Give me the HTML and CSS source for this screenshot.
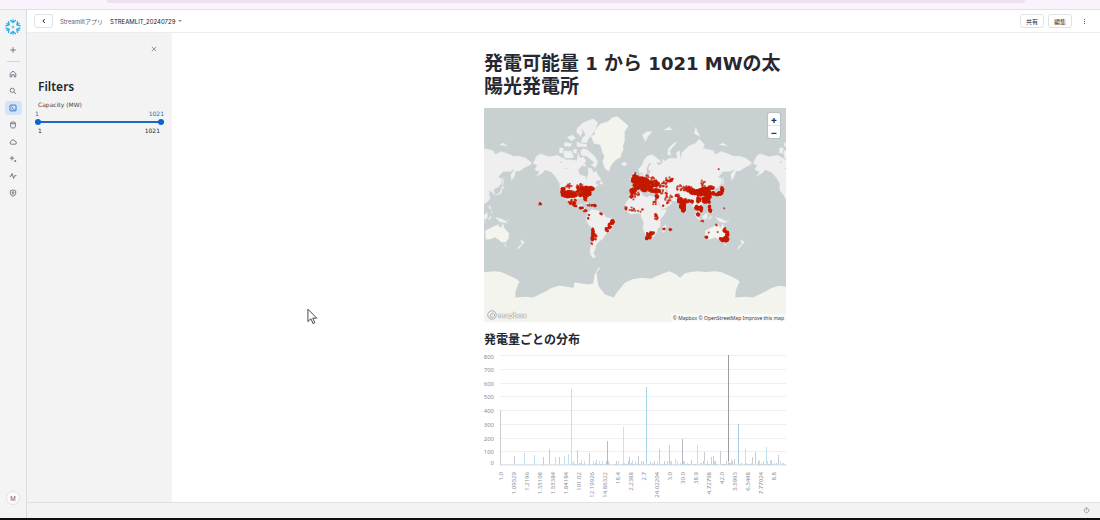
FILE: index.html
```html
<!DOCTYPE html>
<html lang="ja">
<head>
<meta charset="utf-8">
<title>STREAMLIT_20240729</title>
<link rel="stylesheet" href="styles.css">
</head>
<body>
<div class="browser-strip"><div class="browser-pill"></div></div>
<div class="app">
  <nav class="rail" aria-label="ナビゲーション">
    <a class="logo" href="#" aria-label="Snowflake">
      <svg viewBox="0 0 16 16" width="16" height="16">
        <g fill="none" stroke="#35aee3" stroke-width="1.4" stroke-linecap="round" stroke-linejoin="round">
          <g id="arm"><path d="M5.6 1.4 8 3.6l2.4-2.2M8 3.600V1"/></g>
          <use href="#arm" transform="rotate(60 8 8)"/>
          <use href="#arm" transform="rotate(120 8 8)"/>
          <use href="#arm" transform="rotate(180 8 8)"/>
          <use href="#arm" transform="rotate(240 8 8)"/>
          <use href="#arm" transform="rotate(300 8 8)"/>
        </g>
        <path d="M8 6.8 9.2 8 8 9.2 6.8 8z" fill="none" stroke="#35aee3" stroke-width=".8"/>
      </svg>
    </a>
    <a class="rail-item" href="#" aria-label="作成"><svg viewBox="0 0 8 8"><path d="M4 1.2v5.6M1.2 4h5.6"/></svg></a>
    <hr class="rail-rule">
    <a class="rail-item" href="#" aria-label="ホーム"><svg viewBox="0 0 8 8"><path d="M1.2 3.5 4 1.1l2.8 2.4v3.4H5.2V4.7H2.8v2.2H1.2z"/></svg></a>
    <a class="rail-item" href="#" aria-label="検索"><svg viewBox="0 0 8 8"><circle cx="3.3" cy="3.3" r="2.1"/><path d="m4.9 4.9 2.2 2.2"/></svg></a>
    <a class="rail-item active" href="#" aria-label="プロジェクト"><svg viewBox="0 0 8 8"><rect x="1" y="1.1" width="6" height="5.8" rx=".6"/><path d="m2.4 2.6 1.4 1.3-1.4 1.3M4.3 5.4h1.5"/></svg></a>
    <a class="rail-item" href="#" aria-label="データ"><svg viewBox="0 0 8 8"><ellipse cx="4" cy="1.9" rx="2.3" ry=".9"/><path d="M1.7 1.9v4.2c0 1.2 4.6 1.2 4.6 0V1.9"/></svg></a>
    <a class="rail-item" href="#" aria-label="データ製品"><svg viewBox="0 0 8 8"><path d="M2.1 6.2a1.4 1.4 0 0 1 0-2.7 2 2 0 0 1 3.9-.1 1.4 1.4 0 0 1 0 2.8z"/></svg></a>
    <a class="rail-item" href="#" aria-label="AI と ML"><svg viewBox="0 0 8 8"><path d="M3 1v4.4M.8 3.2h4.4M6.2 5v2M5.2 6h2"/></svg></a>
    <a class="rail-item" href="#" aria-label="モニタリング"><svg viewBox="0 0 8 8"><path d="M.5 4.2h1.6l1-2.7 1.5 5 1-2.8h1.9"/></svg></a>
    <a class="rail-item" href="#" aria-label="管理者"><svg viewBox="0 0 8 8"><path d="M4 .9 6.7 1.8v2.4C6.7 5.8 5.4 6.8 4 7.3 2.6 6.8 1.3 5.8 1.3 4.2V1.8z"/><circle cx="4" cy="3.4" r=".8"/><path d="M2.8 5.6c.3-1.2 2.1-1.2 2.4 0"/></svg></a>
    <button class="avatar" type="button">M</button>
  </nav>
  <div class="workspace">
    <header class="topbar">
      <button class="btn back" type="button" aria-label="戻る"><svg viewBox="0 0 6 6"><path d="M3.8 1 1.9 3l1.9 2"/></svg></button>
      <a class="crumb" href="#">Streamlitアプリ</a>
      <button class="app-name" type="button">STREAMLIT_20240729<span class="caret"></span></button>
      <div class="actions">
        <button class="btn" type="button">共有</button>
        <button class="btn" type="button">編集</button>
        <button class="more" type="button" aria-label="その他"><i></i><i></i><i></i></button>
      </div>
    </header>
    <div class="content">
      <aside class="filters">
        <button class="close" type="button" aria-label="閉じる"><svg viewBox="0 0 6 6"><path d="m.8.8 4.4 4.4M5.2.8.8 5.2"/></svg></button>
        <h2>Filters</h2>
        <label class="filter-label" for="cap-min">Capacity (MW)</label>
        <div class="values"><span>1</span><span>1021</span></div>
        <div class="slider">
          <input id="cap-min" class="range" type="range" min="1" max="1021" value="1">
          <input class="range top" type="range" min="1" max="1021" value="1021" aria-label="Capacity max">
        </div>
        <div class="limits"><span>1</span><span>1021</span></div>
      </aside>
      <main class="report">
        <div class="column">
          <h1>発電可能量<span class="latin"> 1 </span>から<span class="latin"> 1021 MW</span>の太陽光発電所</h1>
          <div class="map">
            <svg id="map" viewBox="0 0 302 214" role="img" aria-label="太陽光発電所の地図"></svg>
            <div class="zoom"><button type="button" aria-label="拡大">+</button><button type="button" aria-label="縮小">−</button></div>
            <a class="brand" href="#"><svg viewBox="0 0 10 10"><circle cx="5" cy="5" r="4.2"/><path d="M3 7c0-5 4.500-5 4.500-2S5 7 3 7zM5 3.800v1.600"/></svg>mapbox</a>
            <div class="credits"><a href="#">© Mapbox</a> <a href="#">© OpenStreetMap</a> <a href="#" class="improve">Improve this map</a></div>
          </div>
          <h3>発電量ごとの分布</h3>
          <svg id="chart" class="chart" viewBox="0 0 302 148" role="img" aria-label="発電量ごとの分布"></svg>
        </div>
      </main>
    </div>
    <footer class="statusbar">
      <svg viewBox="0 0 8 8"><path d="M2.400 1.700a2.700 2.700 0 1 0 3.200 0M4 .8v3.400M2.600 1.200h2.800"/></svg>
    </footer>
  </div>
</div>
<div class="window-edge"></div>
<svg class="cursor" viewBox="0 0 12 18"><path d="M1 1v13.500l3.300-3 2.200 5.200 2-.9-2.200-5h4.300z"/></svg>
<script src="script.js"></script>
</body>
</html>
```
FILE: styles.css
```css
* { box-sizing: border-box; }
body {
  margin: 0;
  min-height: 100vh;
  display: flex;
  flex-direction: column;
  background: #fff;
  color: #23262e;
  font-family: Inter, "Noto Sans CJK JP", sans-serif;
  font-size: 6px;
}
button {
  margin: 0;
  padding: 0;
  border: 0;
  background: none;
  color: inherit;
  font: inherit;
}
a { color: inherit; text-decoration: none; }
svg { display: block; }

.browser-strip {
  height: 10px;
  padding: 0 75px 0 107px;
  background: #faf3fc;
  border-bottom: 1px solid #e2dfe8;
}
.browser-pill {
  height: 3px;
  border-radius: 0 0 6px 6px;
  background: #ebe2ee;
}
.app { flex: 1; display: flex; }
.window-edge { height: 2px; background: #101010; }

.rail {
  width: 27px;
  flex: none;
  display: flex;
  flex-direction: column;
  align-items: center;
  padding: 9px 0 13px;
  background: #f4f4f4;
  border-right: 1px solid #d5dce2;
}
.logo { margin-bottom: 8px; }
.rail-item {
  width: 17px;
  height: 14px;
  margin-bottom: 3px;
  border-radius: 3px;
  display: grid;
  place-items: center;
  color: #596273;
}
.rail-item svg {
  width: 8px;
  height: 8px;
  fill: none;
  stroke: currentColor;
  stroke-width: .8;
}
.rail-item.active { background: #d3e5fb; color: #1a60ad; }
.rail-rule {
  width: 13px;
  margin: 1px 0 5px;
  border: 0;
  border-top: 1px solid #d2d6dc;
}
.avatar {
  width: 14px;
  height: 14px;
  margin-top: auto;
  border: 1px solid #e0e2e6;
  border-radius: 50%;
  background: #fbfbfb;
  color: #596273;
}

.workspace { flex: 1; min-width: 0; display: flex; flex-direction: column; }
.topbar {
  height: 23px;
  display: flex;
  align-items: center;
  gap: 7px;
  padding: 0 12px 0 7px;
  background: #fff;
  border-bottom: 1px solid #ededf0;
}
.btn {
  height: 14px;
  padding: 0 5px;
  display: grid;
  place-items: center;
  border: 1px solid #dfe1e5;
  border-radius: 3px;
  background: #fff;
}
.back { width: 19px; padding: 0; }
.back svg { width: 6px; height: 6px; fill: none; stroke: #23262e; }
.crumb { color: #596273; }
.app-name { display: flex; align-items: center; gap: 3px; color: #17191e; }
.caret {
  border: 2px solid transparent;
  border-top-color: #8c929c;
  border-bottom: 0;
}
.actions { display: flex; align-items: center; gap: 4px; margin-left: auto; }
.more { width: 8px; margin-left: 4px; display: grid; gap: 1px; justify-items: center; }
.more i { width: 1px; height: 1px; background: #4a5160; }

.content { flex: 1; display: flex; }
.filters {
  width: 145px;
  flex: none;
  padding: 13px 8px 0 11px;
  background: #f3f3f3;
  font-family: "DejaVu Sans", sans-serif;
  line-height: 8px;
}
.close { display: block; margin: 0 7px 0 auto; }
.close svg { width: 6px; height: 6px; fill: none; stroke: #7b7f87; stroke-width: .8; }
.filters h2 { margin: 27px 0 6px; font-size: 12px; line-height: 16px; font-family: "Noto Sans", sans-serif; font-weight: 600; }
.filter-label { display: block; color: #44464d; }
.values, .limits { display: flex; justify-content: space-between; }
.values { margin: 1px 0 0 -3px; color: #1769c5; }
.limits { margin-top: 1px; padding-right: 4px; }
.slider { display: grid; height: 8px; margin: 0 0 0 -3px; }
.range {
  grid-area: 1 / 1;
  width: 100%;
  height: 8px;
  margin: 0;
  appearance: none;
  background: transparent;
}
.range::-webkit-slider-runnable-track { height: 2px; background: #1769c5; }
.range.top { pointer-events: none; }
.range.top::-webkit-slider-runnable-track { background: transparent; }
.range::-webkit-slider-thumb {
  appearance: none;
  width: 6px;
  height: 6px;
  margin-top: -2px;
  border-radius: 50%;
  background: #0b63ce;
  pointer-events: auto;
}

.report { flex: 1; display: flex; justify-content: center; padding: 17px 12px 0 10px; }
.column { width: 100%; max-width: 302px; }
h1 {
  margin: 0 0 12px;
  color: #262730;
  font-family: "Noto Sans CJK JP", sans-serif;
  font-size: 19px;
  line-height: 23px;
}
.latin { font-family: "DejaVu Sans", sans-serif; font-size: 18px; line-height: 1; }
h3 {
  margin: 8px 0 2px;
  color: #262730;
  font-family: "Noto Sans CJK JP", sans-serif;
  font-size: 12px;
  line-height: 18px;
}
.map { position: relative; background: #c8d0d1; }
.zoom {
  position: absolute;
  top: 5px;
  right: 6px;
  width: 12px;
  display: grid;
  border-radius: 2px;
  background: #fff;
  box-shadow: 0 0 0 1px #b9c1c2;
}
.zoom button { height: 12px; font-size: 10px; line-height: 12px; font-weight: 700; color: #333; }
.zoom button + button { border-top: 1px solid #e3e3e3; height: 13px; }
.brand {
  position: absolute;
  left: 3px;
  bottom: 2px;
  display: flex;
  align-items: center;
  gap: 1px;
  color: #fff;
  font: 700 8px/10px Lato, sans-serif;
  text-shadow: 0 0 1px #777, 0 0 1px #777;
}
.brand svg { width: 10px; height: 10px; fill: #fff; stroke: #9ba0a0; stroke-width: .9; }
.credits {
  position: absolute;
  right: 0;
  bottom: 0;
  padding: 0 2px;
  background: #fafaf8;
  color: #3c3c3c;
  font: 5px/8px "Noto Sans", sans-serif;
}
.chart text { font: 6px "Noto Sans", sans-serif; fill: #8b8d96; }
.grid-line { stroke: #efeff1; stroke-width: 1; }

.statusbar {
  height: 16px;
  display: flex;
  align-items: center;
  justify-content: flex-end;
  padding-right: 10px;
  background: #f3f3f3;
  border-top: 1px solid #dfe1e3;
}
.statusbar svg { width: 7px; height: 7px; fill: none; stroke: #8a8d95; stroke-width: .8; }
.cursor { position: absolute; left: 307px; top: 308px; width: 11px; height: 17px; fill: #fff; stroke: #3a3a3a; stroke-width: 1; }
```
FILE: script.js
```js
const NS = 'http://www.w3.org/2000/svg';
function add(parent, tag, attrs, text) {
  const el = document.createElementNS(NS, tag);
  for (const k in attrs) el.setAttribute(k, attrs[k]);
  if (text !== undefined) el.textContent = text;
  parent.appendChild(el);
  return el;
}
let seed = 7;
function rnd() {
  seed = (seed * 16807) % 2147483647;
  return seed / 2147483647;
}

/* Web Mercator, three copies of the world side by side */
const SCALE = 0.611, PERIOD = 220;
function project(lon, lat) {
  const m = Math.log(Math.tan(Math.PI / 4 + lat * Math.PI / 360)) * 180 / Math.PI;
  return [151.6 + SCALE * lon, 109 - SCALE * m];
}
function outline(str) {
  return 'M' + str.trim().split(/\s+/).map(p => {
    const [x, y] = project(...p.split(',').map(Number));
    return x.toFixed(1) + ' ' + y.toFixed(1);
  }).join('L') + 'Z';
}
const land = [
  // Eurasia
  '-9,37 -9,43 -2,43.5 -1,46 -4.5,48.5 2,51 5,53 8.5,54 8,57 10.5,57.5 10,55 14,54 19,54.5 21,57 24,57.5 23.5,59.5 29,60 24,60.2 21.5,61 22,63.5 25.5,65.5 22,65.8 17.5,61.5 18.5,60 16.5,57 14,55.5 12.5,56 11,59 7,58 5,60 5,62 10,64 14,68 19,70 26,71 31,70 41,67 40,66 33,66.5 38,64 44,66 44,68.5 47,67 54,68.5 60,69 68,68.5 67,72 72,73 73,68 76,72 81,73.5 87,75 98,76 104,77.7 113,75.5 110,74 127,73 130,71 140,72.5 150,71.5 160,70 170,70 180,69 190,66 187,64.5 178,62.5 170,60 164,60 162,56 157,51 156,57 163,62 155,59.5 143,59.5 135,54.5 141,53 140,48 135,43.5 130,42.5 127.5,39.5 129.5,36 126.5,34.5 126,38 121,39 118,39 122,37 119.5,35 122,31 120,26 116,23 110,21 106,20 109,13 105,9 103,11 100,13.5 99.5,9 103,4 104,1.5 100,6 98,10 97.5,16 94,17 91.5,22.5 87,21 80,15 80,10 77.5,8 73,18 72.5,21 67,25 57,26 51,29 48,30 51,25 56,25.5 59.5,22.5 52,16 44,12.5 39,21 35,28 34,31 36,36.5 27,37 27,40 35,42 41,41.5 37,45 33,45 31,46.5 28,43 26,40.5 23,40 23,37 21,37 19.5,41 14,45 12.5,44.5 18,40 16,38 12,42 9,44 3,43 0,40 -2,37 -5.5,36',
  // Africa
  '-6,35.500 10,37 11,33.500 19,30.500 22,32.500 34,31 35,28 37,21 43,11.500 51,12 47,4 40,-4 40.500,-15 35,-20 35,-24 32,-28 27,-33.500 20,-34.800 18,-32 12,-18 13.500,-9 9,0 9,4.500 4,6.500 -8,4.500 -13,8 -17,14.500 -17,21 -10,30',
  // North America
  '-168,65.500 -162,70 -156,71.300 -141,69.700 -128,70.500 -114,68 -108,68 -96,67.500 -94,72 -91,69 -85,69.500 -81,67 -87,64.500 -94,61 -92,57 -82,55 -80,51.500 -79,55 -77,58 -78,62.500 -72,62 -69,58.500 -65,60 -61,56 -56,52 -66,50 -65,48 -61,46 -66,43.800 -70,43.500 -70,41.500 -74,40 -76,36 -81,31.500 -80,26 -82,28 -84,30 -90,29.500 -97,28 -97,21 -91,18.500 -90,21 -87,21 -88,16 -83,15 -83,10 -79,9.500 -77,8 -80,7 -85,10.500 -92,14 -97,16 -105,20 -109,25 -113,31 -115,31 -110,23.500 -115,29 -118,34 -124,40 -124,48 -130,54 -138,59 -148,61 -153,58 -163,55 -157,59 -165,61 -161,64.500',
  // South America
  '-77,8 -72,12 -62,10.500 -52,5 -49,0 -40,-3 -35,-6 -39,-14 -41,-22 -48,-26 -54,-34 -58,-36 -62,-39 -65,-42 -66,-46 -69,-51 -65,-55 -71,-55 -75,-50 -73,-40 -71,-30 -70,-18 -76,-14 -81,-5 -80,1',
  // Australia
  '114,-22 122,-18 129,-15 136,-12 136,-15 140,-17.500 142.500,-11 146,-19 153,-26 152,-33 147,-38.500 140,-38 137,-35 130,-31.500 123,-34 115,-34.500',
  // Greenland
  '-73,78.500 -67,79.200 -66,80.500 -58,82 -45,82.500 -38,83.300 -30,83.500 -20,82.500 -12,81.500 -18,80 -18,77 -21,75 -20,73.500 -24,71 -24,69.500 -32,68 -38,65.500 -42,62.500 -43,60 -48,61 -51,63 -54,67 -51,69.500 -54,72 -58,75.500 -68,76',
  // Antarctica
  '-180,-78.300 -168,-78.500 -158,-77.500 -148,-76.500 -138,-75 -125,-74 -112,-74.500 -102,-75 -100,-72.500 -88,-73 -78,-73.500 -69,-73 -67,-68 -60,-63.500 -58,-63.500 -64,-67 -61,-74 -50,-77.500 -36,-78.500 -28,-76 -17,-72.500 -5,-70.800 10,-70 25,-70.500 35,-69 45,-67.500 55,-66 66,-68 73,-70 80,-67.500 90,-66.500 102,-66 115,-66.500 130,-66 140,-66.500 152,-68.500 164,-70.500 170,-72 164,-76 163,-78.500 180.500,-78.300 180.500,-85 -180,-85',
  // islands
  '-5,50 1,51.500 0,53 -2,56 -3,58.500 -6,57 -3,54', '-10,52 -6,52.500 -6,55 -9,54',
  '-24,65.500 -16,66.500 -14,65 -19,63.500', '130,32 132,34 139,35.500 141,38 141,41 145,43.500 142,45.500 140,41 138,37 131,34',
  '142,46 144,49 143,54 142,51', '44,-17 49,-12.500 50,-16 47,-25 44,-23',
  '95,5.500 104,-2 106,-6 101,-2', '109,1 117,7 118,1 115,-4 110,-2', '119,-5 121,0 125,1 122,-3',
  '105,-6 115,-8 108,-7.500', '120,18 122,18 124,12 121,14', '123,9 126,9 125,6',
  '131,-1 138,-2 147,-6 150,-10 143,-9 138,-8', '150,-5 153,-4 150,-6',
  '172,-34.500 178,-38 175,-41 173,-39', '172,-41 174,-42 168,-46.500 167,-45',
  '145,-41 148,-41 147,-43.500', '-84,22 -77,21 -74,20 -78,22.500', '-74,19.500 -69,19 -73,18',
  '-59,48 -56,51 -53,47', '-80,73.500 -76,72.500 -72,71.500 -67,70 -62,66.500 -66,62.500 -73,64.500 -67,66 -73,68 -80,70 -89,70.500 -90,73 -85,73.800',
  '-116,69 -105,69 -101,69.500 -106,73 -110,72.500 -117,73 -118,71.500', '-125,72 -120,71.500 -118,74 -124,74.300',
  '-89,76.500 -80,76.300 -78,77.500 -72,79 -66,80.500 -62,82.300 -70,83.100 -85,82.300 -92,81.500 -86,80.500 -82,79 -87,78',
  '-97,80 -90,78.500 -87,80 -90,81.300 -95,81.200', '-96,74.800 -80,74.700 -80,75.700 -90,76 -96,76.700', '-117,75 -106,74.800 -105,76 -116,76.500', '-102,72 -97,71.500 -96,73.700 -102,73.500',
  '-105,77 -98,78 -104,79 -112,78.300', '-87,64 -81,63.500 -84,65.800',
  '52,71 58,70.500 56,73 68,76.500 63,76.200 54,74', '11,79 16,76.700 20,78.500 27,80 18,80', '96,79.500 105,78.500 98,81.200', '47,80.500 60,80.500 55,81.300',
  '137,75.500 150,75 143,76.200', '80,7 82,7 80,9.500'
];
const lakes = ['47,45 53,46.500 51,42 54,38 49,38 49,41', '-92,47 -85,48 -84,45 -87,42 -88,45', '-83,45 -80,45 -82,43', '14,59.500 12.500,58.500 14,58.500', '-125,66 -120,66 -122,67', '-117,62 -110,62.500 -114,61.500'];

const map = document.getElementById('map');
const defs = add(map, 'defs', {});
const world = add(defs, 'g', { id: 'world' });
land.forEach((s, i) => add(world, 'path', {
  d: outline(s), fill: i === 5 || i === 6 || i === 4 ? '#f3f4ee' : '#efeff0',
  stroke: i === 6 ? 'none' : '#efeff0', 'stroke-width': .3
}));
lakes.forEach(s => add(world, 'path', { d: outline(s), fill: '#c8d0d1' }));
[-PERIOD, 0, PERIOD].forEach(dx => add(map, 'use', { href: '#world', x: dx }));

/* Plant clusters: lon, lat, lon radius, lat radius, count */
const clusters = [
  [-119, 38, 3, 5, 60], [-111, 35, 7, 4, 90], [-102, 35, 6, 4, 50], [-117, 44, 4, 2, 7], [-109, 45, 4, 3, 9],
  [-90, 44, 6, 3, 32], [-80, 41, 6, 4, 75], [-79, 36, 5, 3, 110], [-87, 37, 8, 5, 85], [-73, 42, 4, 2, 50], [-82, 30, 2, 4, 30],
  [-103, 24, 6, 4, 30], [-98, 19, 4, 2, 9], [-157, 21, 2, 1, 6], [-90, 14.5, 3, 1, 14], [-83, 10, 3, 1.500, 6],
  [-72, 19, 6, 1, 9], [-66, 18, 1.500, 1, 9], [-78, 1, 2, 4, 5], [-57, 5, 1.500, 1, 5],
  [-70, -25, 1.500, 6, 40], [-71, -33, 1.500, 3, 22], [-66, -31, 2, 4, 10], [-72, -40, 1, 1, 2],
  [-38, -8, 2.500, 3, 26], [-42, -14, 2, 4, 24], [-47, -20, 2, 3, 15],
  [2, 52, 6, 3, 80], [0, 56, 2, 2, 10], [9, 50, 6, 4, 160], [-3, 52, 3, 4, 40], [3, 45, 6, 3, 95], [-4, 39, 4, 3, 70], [14, 43, 5, 4, 80],
  [15, 50, 6, 3, 90], [23, 47, 5, 4, 55], [25, 41, 4, 3, 35], [32, 48, 6, 3, 45], [33, 39, 7, 2, 55], [22, 53, 8, 3, 15],
  [38, 47, 5, 4, 14], [55, 52, 6, 2, 20], [47, 47, 4, 4, 12], [35, 32, 2, 2, 20], [45, 38, 6, 3, 7],
  [53, 31, 6, 6, 13], [-7, 32, 2, 2, 8], [-6, 28, 4, 5, 5], [3, 34, 8, 3, 9], [31, 25, 3, 5, 8],
  [-16, 14, 1.500, 2, 6], [-4, 13, 7, 3, 8], [35, 0, 4, 5, 13], [50, 20, 5, 5, 7],
  [22, -29, 4, 4, 30], [27, -26, 4, 2, 16], [19, -33, 2, 1.500, 16], [47, -18, 2, 3, 4], [57, -20, 1.500, 1, 6],
  [73, 26, 4, 3, 80], [77, 18, 4, 5, 120], [78, 12, 2, 3, 70], [83, 25, 5, 3, 35], [69, 33, 3, 2, 12],
  [83, 42, 6, 3, 14], [72, 43, 4, 3, 10], [88, 41, 5, 3, 30], [96, 38, 7, 3, 75], [105, 37, 6, 4, 90], [114, 38, 6, 4, 130],
  [119, 34, 4, 5, 100], [113, 41, 7, 2, 60], [123, 43, 6, 2, 35], [114, 27, 5, 4, 55], [103, 27, 3, 4, 28], [110, 47, 4, 4, 9],
  [117, 29, 4, 4, 55], [127, 36, 1.500, 1.500, 34], [133, 34.5, 3, 1, 35], [138, 36, 3, 1.500, 55], [142, 40, 2, 4, 34],
  [101, 15, 3, 3, 38], [107, 13, 2, 4, 32], [102, 4, 2, 2, 14], [121, 14, 1.500, 4, 20], [123, 10, 1, 2, 12], [120.500, 23.500, 1, 1, 10],
  [136, 61.5, .2, .2, 1], [145, 14, .2, .2, 1], [112, -7, 5, 1, 3], [92, 24, 2, 2, 12],
  [146, -21, 2, 3, 18], [150, -27, 2, 4, 26], [148, -34, 4, 3, 45], [143, -35, 3, 2, 22], [139, -34, 1.500, 1.500, 10],
  [116, -31, 1.500, 2, 8], [132, -13, 1, 1, 2], [120, -25, 1, 1, 1], [134, -24, 1, 1, 1], [8, 10, 5, 3, 4]
];
const dots = add(map, 'g', { fill: '#c61a02', 'fill-opacity': .75 });
for (const [lon, lat, rx, ry, n] of clusters) {
  for (let i = 0; i < n; i++) {
    const a = rnd() * Math.PI * 2, r = Math.sqrt(rnd()) * 1.15;
    const [x, y] = project(lon + Math.cos(a) * r * rx, lat + Math.sin(a) * r * ry);
    add(dots, 'circle', { cx: x.toFixed(1), cy: y.toFixed(1), r: 1.1 });
  }
}

/* Distribution chart */
const chart = document.getElementById('chart');
const BASE = 115, STEP = 13.75;
for (let i = 0; i <= 8; i++) {
  const y = Math.round(BASE - i * STEP) + .5;
  add(chart, 'line', { class: 'grid-line', x1: 16, x2: 302, y1: y, y2: y });
  add(chart, 'text', { x: 10, y: i === 0 ? y - 1 : i === 8 ? y + 3 : y + 2, 'text-anchor': 'end' }, i * 100);
}
const labels = ['1.0', '1.09529', '1.2196', '1.35108', '1.55384', '1.84184', '101.02', '12.19926', '14.86322', '18.4', '2.2388', '2.7', '24.02204', '3.0', '30.0', '38.9', '4.72798', '42.0', '5.5993', '6.3448', '7.77024', '8.8'];
labels.forEach((t, i) => {
  const x = 19 + i * 13;
  add(chart, 'text', { transform: `translate(${x} 122) rotate(-90)`, 'text-anchor': 'end' }, t);
});
/* x, height, shade */
const G = '#c9cdd3', B = '#c2e0f2', D = '#9b9da3';
const bars = [
  [16, 55, G], [30, 9, G], [40, 12, B], [50, 10, B], [59, 8, G], [65, 16, G], [71, 8, B], [75, 8, G], [80, 9, B], [84, 11, B],
  [87, 76, B], [93, 15, G], [97, 5, B], [105, 12, G], [112, 5, G], [118, 4, G], [123, 24, '#a6bdd2'], [132, 4, G], [139, 38, '#d5dce4'],
  [145, 8, G], [148, 5, B], [151, 4, B], [154, 9, G], [159, 4, G], [162, 78, '#a9d2eb'], [175, 16, G], [185, 20, '#c3cddd'], [191, 6, G],
  [198, 26, '#b4b8c0'], [207, 5, G], [213, 20, B], [220, 13, G], [227, 8, G], [229, 9, G], [236, 14, G], [244, 110, D], [247, 6, B],
  [250, 6, G], [254, 41, '#a5cce5'], [261, 16, B], [268, 8, G], [271, 13, G], [275, 5, B], [282, 18, B], [287, 5, G], [294, 10, G]
];
for (let x = 88; x < 302; x += 1) {
  const h = rnd();
  if (h > .3) bars.push([x, h > .85 ? 4 : h > .7 ? 2 : 1, rnd() > .5 ? G : B]);
}
bars.forEach(([x, h, fill]) => add(chart, 'rect', { x, y: BASE - h, width: 1, height: h, fill }));
add(chart, 'rect', { x: 16, y: BASE - 1, width: 286, height: 1, fill: '#cbd8e2', 'fill-opacity': .6 });
```
